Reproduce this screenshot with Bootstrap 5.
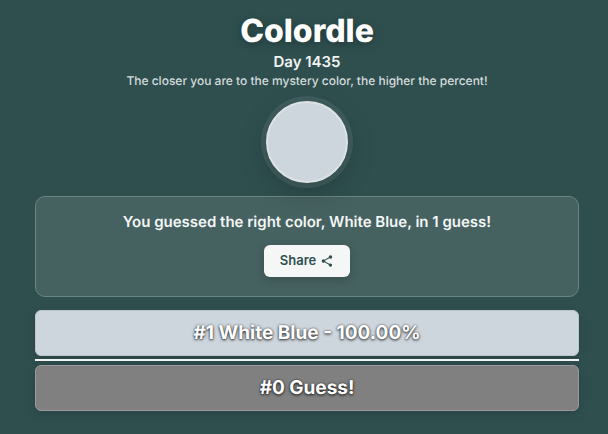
<!DOCTYPE html>
<html lang="en">
<head>
<meta charset="utf-8">
<meta name="viewport" content="width=device-width, initial-scale=1">
<title>Colordle</title>
<link rel="stylesheet" href="https://cdn.jsdelivr.net/npm/bootstrap@5.3.0/dist/css/bootstrap.min.css">
<style>
body { background: #2f4f4f; color: #fff; font-family: Inter, "Liberation Sans", sans-serif; text-rendering: geometricPrecision; }
main { padding: 11px 29px 20px 35px; }
.game-title { font-size: 32px; line-height: 39px; font-weight: 800; text-shadow: 0 2px 8px rgba(0,0,0,.3); }
.day { font-size: 15px; line-height: 24px; font-weight: 600; color: #f0f3f3; }
.hint { font-size: 12px; line-height: 14px; font-weight: 500; color: #d5dcdc; }
.swatch { width: 82px; height: 82px; margin: 13px 0; background: #ced6dd; border: 2px solid #dde2e4; box-shadow: 0 0 0 5px rgba(255,255,255,.08), 0 8px 28px rgba(0,0,0,.22); }
.result { background: #456160; border: 1px solid #6b8583; border-radius: 10px; padding: 15px 16px 19px; }
.result-text { font-size: 15px; line-height: 20px; font-weight: 600; color: #f3f6f6; }
.share { --bs-btn-bg: #f5f7f7; --bs-btn-color: #2f4f4f; --bs-btn-hover-bg: #fff; --bs-btn-hover-color: #2f4f4f; --bs-btn-border-width: 0; width: 86px; height: 32px; margin-top: 13px; padding: 0; border-radius: 6px; font-size: 13px; font-weight: 600; box-shadow: 0 3px 10px rgba(0,0,0,.18); }
.guesses { margin-top: 13px; }
.guess { height: 46px; border: 1px solid; border-radius: 6px; font-size: 19px; line-height: 24px; font-weight: 700; text-shadow: 0 1px 3px rgba(0,0,0,.8), 0 0 2px rgba(0,0,0,.5); box-shadow: 0 3px 10px rgba(0,0,0,.15); }
.guess-hit { background: #ced6dd; border-color: #bdc6ca; }
.guess-empty { background: #808080; border-color: #999; }
.divider { height: 2px; margin: 3px 0 4px; border: 0; background: #f5f7f7; opacity: 1; }
</style>
</head>
<body>
<main class="text-center">
  <header class="d-flex flex-column align-items-center">
    <h1 class="game-title m-0">Colordle</h1>
    <h2 class="day m-0">Day 1435</h2>
    <p class="hint m-0">The closer you are to the mystery color, the higher the percent!</p>
    <div class="swatch rounded-circle" role="img" aria-label="White Blue"></div>
  </header>
  <section class="result">
    <p class="result-text m-0">You guessed the right color, White Blue, in 1 guess!</p>
    <button type="button" class="btn share d-inline-flex align-items-center justify-content-center gap-1">Share
      <svg width="14" height="14" viewBox="0 0 24 24" fill="currentColor" aria-hidden="true"><path d="M18 16.1c-.8 0-1.4.3-2 .8l-7.100-4.200c.1-.2.1-.5.1-.7s0-.5-.1-.7L16 7.200c.5.5 1.200.8 2 .8a3 3 0 1 0-3-3c0 .2 0 .5.1.7L8 9.800A3 3 0 1 0 8 14.200l7.100 4.200c-.1.200-.1.400-.1.600A2.900 2.900 0 1 0 18 16.100z"/></svg>
    </button>
  </section>
  <section class="guesses">
    <div class="guess guess-hit d-flex align-items-center justify-content-center">#1 White Blue - 100.00%</div>
    <hr class="divider">
    <div class="guess guess-empty d-flex align-items-center justify-content-center">#0 Guess!</div>
  </section>
</main>
<script src="https://cdn.jsdelivr.net/npm/bootstrap@5.3.0/dist/js/bootstrap.bundle.min.js"></script>
</body>
</html>
